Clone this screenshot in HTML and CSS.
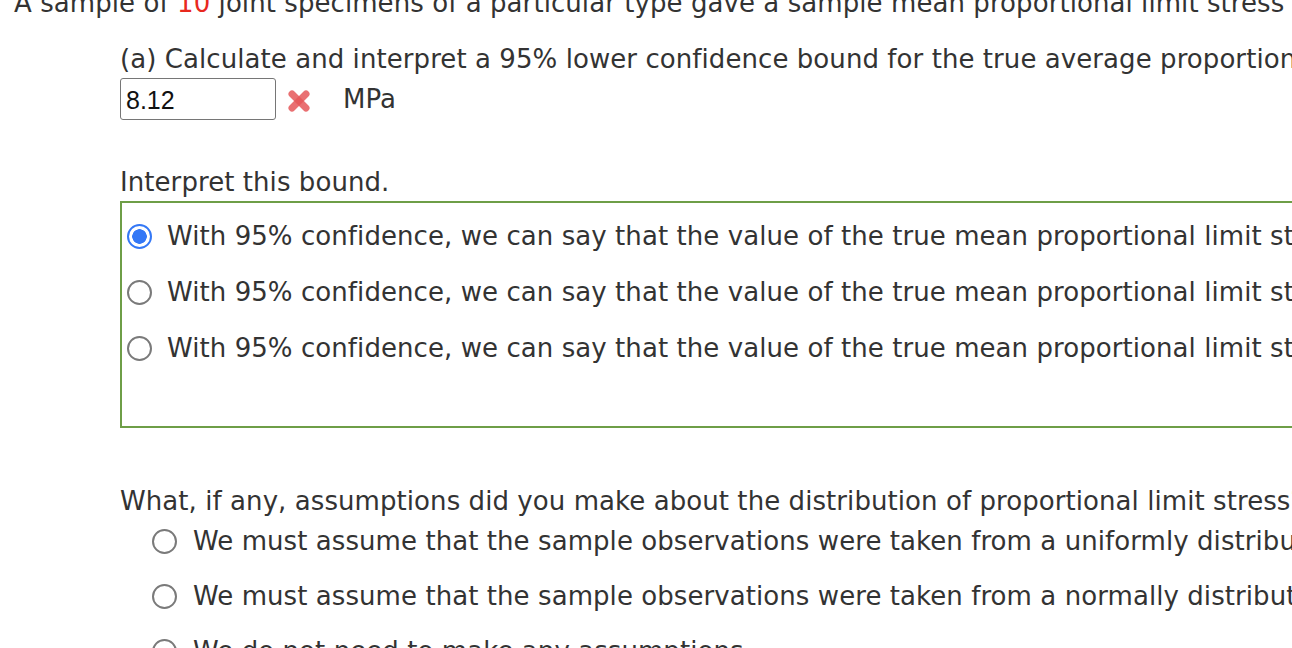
FILE: index.html
```html
<!DOCTYPE html>
<html lang="en">
<head>
  <meta charset="UTF-8">
  <title>Confidence bound</title>
  <link rel="stylesheet" href="styles.css">
</head>
<body>
  <div class="page">
    <p class="intro">A sample of <span class="num">10</span> joint specimens of a particular type gave a sample mean proportional limit stress of 8.44 MPa and a sample standard deviation of 0.70 MPa.</p>

    <div class="part">
      <p class="prompt">(a) Calculate and interpret a 95% lower confidence bound for the true average proportional limit stress of all such joints. (Round your answer to two decimal places.)</p>
      <div class="answer">
        <input class="answer-box" type="text" value="8.12">
        <svg class="wrong" width="28" height="28" viewBox="0 0 28 28">
          <line x1="7" y1="7" x2="21" y2="21" />
          <line x1="21" y1="7" x2="7" y2="21" />
        </svg>
        <span class="unit">MPa</span>
      </div>

      <p class="label interpret">Interpret this bound.</p>
      <div class="choices boxed">
        <label class="choice"><span class="radio checked"></span>With 95% confidence, we can say that the value of the true mean proportional limit stress of all such joints is greater than the lower bound.</label>
        <label class="choice"><span class="radio"></span>With 95% confidence, we can say that the value of the true mean proportional limit stress of all such joints is less than the lower bound.</label>
        <label class="choice"><span class="radio"></span>With 95% confidence, we can say that the value of the true mean proportional limit stress of all such joints is centered around the lower bound.</label>
      </div>

      <p class="label assume">What, if any, assumptions did you make about the distribution of proportional limit stress?</p>
      <div class="choices plain">
        <label class="choice"><span class="radio"></span>We must assume that the sample observations were taken from a uniformly distributed population.</label>
        <label class="choice"><span class="radio"></span>We must assume that the sample observations were taken from a normally distributed population.</label>
        <label class="choice"><span class="radio"></span>We do not need to make any assumptions.</label>
      </div>
    </div>
  </div>
</body>
</html>
```

FILE: styles.css
```css
body {
  margin: 0;
  overflow: hidden;
  background: #fff;
  color: #333;
  font-family: "DejaVu Sans", Verdana, sans-serif;
  font-size: 26px;
  letter-spacing: 0.07px;
}

.page {
  padding-left: 14px;
  white-space: nowrap;
}

p {
  margin: 0;
}

.intro {
  line-height: 30px;
  margin-top: -12px;
}

.num {
  color: #e8281e;
}

.part {
  padding-left: 106px;
}

.prompt {
  margin-top: 26px;
  line-height: 30px;
}

.answer {
  display: flex;
  align-items: center;
  height: 42px;
  margin-top: 4px;
}

.answer-box {
  box-sizing: border-box;
  width: 156px;
  height: 42px;
  margin: 0;
  padding: 2px 5px 0;
  border: 1px solid #767676;
  border-radius: 3px;
  font-family: "Liberation Sans", Arial, sans-serif;
  font-size: 25px;
  letter-spacing: 0;
  color: #111;
}

.wrong {
  margin-left: 9px;
  margin-top: 4px;
}

.wrong line {
  stroke: #e6585a;
  stroke-width: 7;
  stroke-linecap: round;
  opacity: 0.85;
}

.unit {
  margin-left: 30px;
}

.label {
  line-height: 30px;
}

.interpret {
  margin-top: 47px;
}

.choices {
  display: flex;
  flex-direction: column;
}

.boxed {
  margin-top: 4px;
  height: 227px;
  box-sizing: border-box;
  border: 2px solid #6e9e47;
  border-right: none;
  padding: 18px 0 0 5px;
  gap: 26px;
}

.choice {
  display: flex;
  align-items: center;
  gap: 15px;
  line-height: 30px;
}

.radio {
  box-sizing: border-box;
  width: 25px;
  height: 25px;
  border: 2px solid #7a7a7a;
  border-radius: 50%;
  flex: none;
}

.radio.checked {
  border: 2.5px solid #3478f6;
  background: radial-gradient(circle, #3478f6 0 7px, #fff 7.5px);
}

.assume {
  margin-top: 58px;
}

.plain {
  margin-top: 10px;
  padding-left: 32px;
  gap: 25px;
}

.plain .choice {
  gap: 16px;
}
```
